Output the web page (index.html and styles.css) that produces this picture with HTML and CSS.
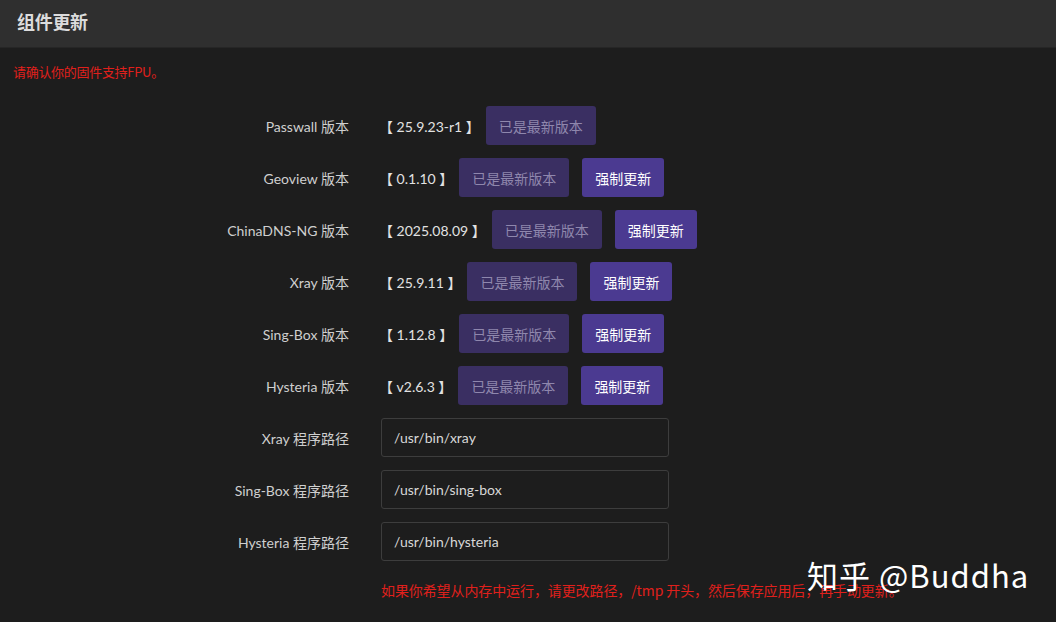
FILE: index.html
```html
<!DOCTYPE html>
<html lang="zh-CN">
<head>
<meta charset="utf-8">
<title>组件更新</title>
<link rel="stylesheet" href="styles.css">
</head>
<body>
<div class="header"><h2 class="title">组件更新</h2></div>
<div class="note">请确认你的固件支持FPU。</div>
<div class="form">
  <div class="row">
    <div class="label">Passwall 版本</div>
    <div class="field"><span class="ver">【 25.9.23-r1 】</span><button class="btn off">已是最新版本</button></div>
  </div>
  <div class="row">
    <div class="label">Geoview 版本</div>
    <div class="field"><span class="ver">【 0.1.10 】</span><button class="btn off">已是最新版本</button><button class="btn on">强制更新</button></div>
  </div>
  <div class="row">
    <div class="label">ChinaDNS-NG 版本</div>
    <div class="field"><span class="ver">【 2025.08.09 】</span><button class="btn off">已是最新版本</button><button class="btn on">强制更新</button></div>
  </div>
  <div class="row">
    <div class="label">Xray 版本</div>
    <div class="field"><span class="ver">【 25.9.11 】</span><button class="btn off">已是最新版本</button><button class="btn on">强制更新</button></div>
  </div>
  <div class="row">
    <div class="label">Sing-Box 版本</div>
    <div class="field"><span class="ver">【 1.12.8 】</span><button class="btn off">已是最新版本</button><button class="btn on">强制更新</button></div>
  </div>
  <div class="row">
    <div class="label">Hysteria 版本</div>
    <div class="field"><span class="ver">【 v2.6.3 】</span><button class="btn off">已是最新版本</button><button class="btn on">强制更新</button></div>
  </div>
  <div class="row">
    <div class="label">Xray 程序路径</div>
    <div class="field"><input class="input" type="text" value="/usr/bin/xray"></div>
  </div>
  <div class="row">
    <div class="label">Sing-Box 程序路径</div>
    <div class="field"><input class="input" type="text" value="/usr/bin/sing-box"></div>
  </div>
  <div class="row">
    <div class="label">Hysteria 程序路径</div>
    <div class="field"><input class="input" type="text" value="/usr/bin/hysteria"></div>
  </div>
  <div class="row tip-row">
    <div class="label"></div>
    <div class="tip">如果你希望从内存中运行，请更改路径，/tmp 开头，然后保存应用后，再手动更新。</div>
  </div>
</div>
<div class="watermark">知乎 @Buddha</div>
</body>
</html>
```

FILE: styles.css
```css
html, body {
  margin: 0;
  padding: 0;
  background: #1d1d1d;
  font-family: "Lato", "Noto Sans CJK SC", sans-serif;
  color: #d4d4d4;
  width: 1056px;
  height: 622px;
  overflow: hidden;
  position: relative;
}
.header {
  height: 48px;
  background: #2f2f2f;
  display: flex;
  align-items: center;
  padding: 0 0 5px 17px;
  border-bottom: 1px solid #262626;
  box-sizing: border-box;
}
.title {
  margin: 0;
  font-size: 18px;
  font-weight: bold;
  color: #dcdcdc;
  font-family: "Noto Sans CJK SC", sans-serif;
  letter-spacing: -0.3px;
}
.note {
  color: #e0201c;
  font-size: 13px;
  font-family: "Noto Sans CJK SC", sans-serif;
  padding: 15px 0 0 13px;
  line-height: 18px;
  height: 25px;
  letter-spacing: -0.3px;
}
.form {
  display: flex;
  flex-direction: column;
  gap: 13px;
  margin-top: 18px;
}
.row {
  display: grid;
  grid-template-columns: 349px 1fr;
  column-gap: 32px;
  align-items: center;
  min-height: 39px;
}
.label {
  text-align: right;
  font-size: 14px;
  color: #cfcfcf;
}
.field {
  display: flex;
  align-items: center;
  gap: 13px;
}
.ver {
  font-size: 14px;
  color: #e2e2e2;
  white-space: pre;
  margin-left: -2px;
  margin-right: -7px;
}
.btn {
  height: 39px;
  border: none;
  border-radius: 3px;
  font-family: "Noto Sans CJK SC", sans-serif;
  font-size: 14px;
  padding: 0;
  cursor: pointer;
}
.btn.off {
  background: #3a2f62;
  color: #8f87ad;
  width: 110px;
}
.btn.on {
  background: #4b3a91;
  color: #ffffff;
  width: 82px;
}
.input {
  width: 288px;
  height: 39px;
  box-sizing: border-box;
  background: #1d1d1d;
  border: 1px solid #3d3d3d;
  border-radius: 3px;
  color: #d8d8d8;
  font-family: "Lato", "Noto Sans CJK SC", sans-serif;
  font-size: 14px;
  padding: 0 12px;
  outline: none;
}
.tip-row {
  min-height: 0;
  margin-top: 6px;
}
.tip {
  color: #e0201c;
  font-size: 14px;
  font-family: "Noto Sans CJK SC", sans-serif;
  line-height: 20px;
  letter-spacing: -0.1px;
}
.watermark {
  position: absolute;
  left: 807px;
  top: 553px;
  font-size: 31px;
  color: #ffffff;
  font-family: "Noto Sans CJK SC", sans-serif;
  letter-spacing: 1px;
  line-height: 44px;
}
```
